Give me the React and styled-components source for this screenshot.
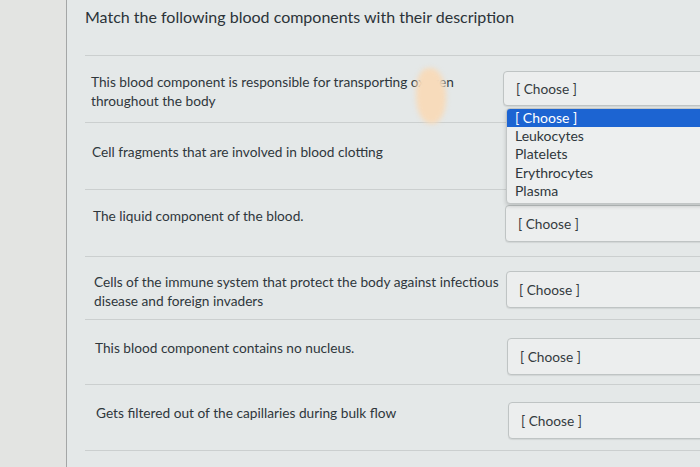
import React from 'react';
import styled, { createGlobalStyle } from 'styled-components';

const GlobalStyle = createGlobalStyle`
  body {
    margin: 0;
    background: #e4e8e8;
    font-family: Lato, "Open Sans", sans-serif;
    color: #2f3a40;
  }
`;

const options = ['[ Choose ]', 'Leukocytes', 'Platelets', 'Erythrocytes', 'Plasma'];

// h = row height, top = offset of the select, text = offset of the prompt
const questions = [
  { lines: ['This blood component is responsible for transporting oxygen', 'throughout the body'], open: true, smudge: true, h: 67, top: 15, text: 16 },
  { lines: ['Cell fragments that are involved in blood clotting'], hidden: true, h: 67, top: 20, text: 19 },
  { lines: ['The liquid component of the blood.'], h: 67, top: 15, text: 16 },
  { lines: ['Cells of the immune system that protect the body against infectious', 'disease and foreign invaders'], h: 63, top: 14, text: 15 },
  { lines: ['This blood component contains no nucleus.'], h: 65, top: 18, text: 18 },
  { lines: ['Gets filtered out of the capillaries during bulk flow'], h: 66, top: 17, text: 18 },
];

const Page = styled.div`
  display: flex;
  height: 467px;
  overflow: hidden;
`;

const Rail = styled.div`
  width: 66px;
  flex-shrink: 0;
  background: #e3e4e2;
  border-right: 1px solid #a4a6a6;
`;

const Main = styled.div`
  flex: 1;
  padding-left: 18px;
  min-width: 0;
`;

const Title = styled.h2`
  margin: 0;
  height: 55px;
  padding-top: 7px;
  box-sizing: border-box;
  font-size: 16px;
  font-weight: 400;
  color: #2b3338;
`;

const List = styled.div`
  border-top: 1px solid #cbcfcf;
`;

const Row = styled.div`
  display: grid;
  grid-template-columns: 412px 1fr;
  height: ${(p) => p.$h}px;
  box-sizing: border-box;
  border-bottom: 1px solid #cbcfcf;
  padding-left: ${(p) => p.$indent}px;
`;

const Prompt = styled.div`
  position: relative;
  padding-top: ${(p) => p.$top}px;
  font-size: 13.7px;
  line-height: 19px;
  white-space: nowrap;
  color: #2f373c;
`;

const Smudge = styled.div`
  position: absolute;
  left: 325px;
  top: 12px;
  width: 30px;
  height: 56px;
  border-radius: 40% 50% 45% 50%;
  background: #f7dbbb;
  filter: blur(2.5px);
`;

const SelectCol = styled.div`
  position: relative;
  padding-top: ${(p) => p.$top}px;
`;

const SelectBox = styled.div`
  width: 220px;
  height: ${(p) => p.$height}px;
  box-sizing: border-box;
  border: 1px solid #bfc4c4;
  border-radius: 4px;
  background: #eceeee;
  box-shadow: 0 1px 1px rgba(0, 0, 0, 0.08);
  display: flex;
  align-items: center;
  padding-left: 12px;
  font-size: 13.7px;
  color: #343b40;
  visibility: ${(p) => (p.$hidden ? 'hidden' : 'visible')};
`;

const Menu = styled.div`
  position: absolute;
  top: 52px;
  left: 3px;
  width: 220px;
  z-index: 2;
  background: #edefef;
  border: 1px solid #c2c6c6;
  border-radius: 4px;
  box-shadow: 0 2px 4px rgba(0, 0, 0, 0.18);
  overflow: hidden;
  padding-bottom: 3px;
`;

const Option = styled.div`
  height: 18.2px;
  line-height: 18px;
  padding-left: 8px;
  font-size: 14px;
  color: ${(p) => (p.$active ? '#ffffff' : '#2f373c')};
  background: ${(p) => (p.$active ? '#1c64d2' : 'transparent')};
`;

export default function App() {
  return (
    <>
      <GlobalStyle />
      <Page>
        <Rail />
        <Main>
          <Title>Match the following blood components with their description</Title>
          <List>
            {questions.map((q, i) => (
              <Row key={i} $indent={6 + i} $h={q.h}>
                <Prompt $top={q.text}>
                  {q.lines.map((l, j) => (
                    <div key={j}>{l}</div>
                  ))}
                  {q.smudge && <Smudge />}
                </Prompt>
                <SelectCol $top={q.top}>
                  <SelectBox $hidden={q.hidden} $height={35 + Math.min(i, 2)}>
                    [ Choose ]
                  </SelectBox>
                  {q.open && (
                    <Menu>
                      {options.map((o, j) => (
                        <Option key={o} $active={j === 0}>{o}</Option>
                      ))}
                    </Menu>
                  )}
                </SelectCol>
              </Row>
            ))}
          </List>
        </Main>
      </Page>
    </>
  );
}
